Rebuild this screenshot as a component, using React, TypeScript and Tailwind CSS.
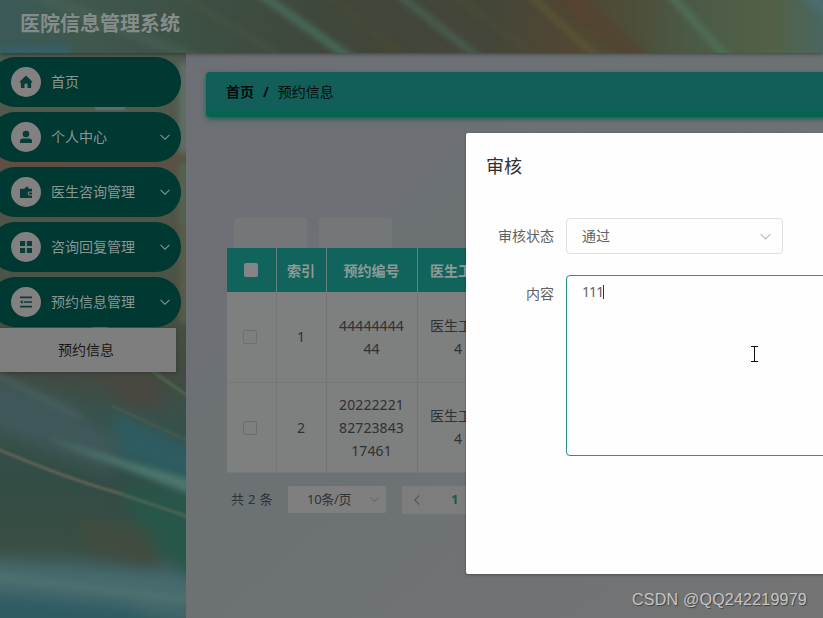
import React from 'react';

interface MenuItem {
    label: string;
    icon: React.ReactNode;
    expandable: boolean;
}

interface Appointment {
    id: number;
    code: string[];
    doctor: string[];
}

const menuItems: MenuItem[] = [
    { label: '首页', expandable: false, icon: <path d="M8 1.6 1.8 7.4v1h1.1V14h3.6v-4.2h3V14h3.6V8.4h1.1v-1z" /> },
    { label: '个人中心', expandable: true, icon: <><circle cx="8" cy="5" r="3.3" /><path d="M2 14v-2.2c0-1.5 1.1-2.4 2.6-2.4h6.8c1.5 0 2.6.9 2.6 2.4V14z" /></> },
    { label: '医生咨询管理', expandable: true, icon: <path fillRule="evenodd" d="M2 4.8h4.2L9 2.2l2 2.6h3v2.6h-2.4a2 2 0 0 0 0 4H14V14H2zM11.6 8.4H14v2h-2.4a1 1 0 0 1 0-2z" /> },
    { label: '咨询回复管理', expandable: true, icon: <path d="M2 2h5.1v5.1H2zM8.9 2H14v5.1H8.9zM2 8.9h5.1V14H2zM8.9 8.9H14V14H8.9z" /> },
    { label: '预约信息管理', expandable: true, icon: <path d="M2 2.6h12v1.6H2zM5.8 7.2H14v1.6H5.8zM2 11.8h12v1.6H2zM4.6 6v4L2 8z" /> },
];

const rows: Appointment[] = [
    { id: 1, code: ['44444444', '44'], doctor: ['医生工号', '4'] },
    { id: 2, code: ['20222221', '82723843', '17461'], doctor: ['医生工号', '4'] },
];

const Chevron: React.FC<{ className: string }> = ({ className }) => (
    <svg viewBox="0 0 12 12" className={className} fill="none" stroke="currentColor" strokeWidth="1.1">
        <path d="m1.5 3.8 4.5 4.4 4.5-4.4" />
    </svg>
);

const HeaderBackdrop: React.FC = () => (
    <svg className="absolute inset-0 h-full w-full" viewBox="0 0 823 53" preserveAspectRatio="none">
        <defs>
            <linearGradient id="head" x1="0" y1="0" x2="1" y2="0">
                <stop offset="0" stopColor="#3b5a59" />
                <stop offset=".1" stopColor="#40584e" />
                <stop offset=".25" stopColor="#3d4f43" />
                <stop offset=".4" stopColor="#40473b" />
                <stop offset=".6" stopColor="#454639" />
                <stop offset=".7" stopColor="#524733" />
                <stop offset=".77" stopColor="#4d4e3a" />
                <stop offset=".84" stopColor="#4b5a46" />
                <stop offset=".94" stopColor="#526147" />
                <stop offset="1" stopColor="#4a6660" />
            </linearGradient>
            <filter id="headSoft" x="-10%" y="-50%" width="120%" height="200%" colorInterpolationFilters="sRGB">
                <feGaussianBlur stdDeviation="3" />
            </filter>
        </defs>
        <rect width="823" height="53" fill="url(#head)" />
        <g filter="url(#headSoft)" fill="none">
            <path d="M-20 62 70 58" stroke="#356069" strokeWidth="26" />
            <path d="M252-12 360 65" stroke="#486a5a" strokeWidth="8" />
            <path d="M170-12 295 65" stroke="#495745" strokeWidth="5" opacity=".6" />
            <path d="M390-12 488 65" stroke="#486253" strokeWidth="6" />
            <path d="M318-12 410 62" stroke="#4b4a35" strokeWidth="4" />
            <path d="M445-12 545 62" stroke="#4c4c36" strokeWidth="4" />
            <path d="M522-12 602 62" stroke="#5d5c38" strokeWidth="4" />
            <path d="M556-12 645 65" stroke="#553f2c" strokeWidth="20" opacity=".5" />
            <path d="M664-12 734 65" stroke="#4f7059" strokeWidth="7" />
            <path d="m800-12 40 34" stroke="#4a6d70" strokeWidth="12" />
            <path d="m20-12 190 77" stroke="#4c6358" strokeWidth="12" opacity=".5" />
        </g>
    </svg>
);

const SidebarBackdrop: React.FC = () => (
    <svg className="absolute inset-0 h-full w-full" viewBox="0 0 186 565" preserveAspectRatio="none">
        <defs>
            <linearGradient id="side" x1="0" y1="0" x2="0" y2="1">
                <stop offset="0" stopColor="#4e5b51" />
                <stop offset=".1" stopColor="#52594c" />
                <stop offset=".19" stopColor="#5a5143" />
                <stop offset=".35" stopColor="#4b5748" />
                <stop offset=".56" stopColor="#434a41" />
                <stop offset=".63" stopColor="#3a514a" />
                <stop offset=".76" stopColor="#324d46" />
                <stop offset=".87" stopColor="#3a4e43" />
                <stop offset=".93" stopColor="#40656a" />
                <stop offset="1" stopColor="#3a6263" />
            </linearGradient>
            <filter id="sideWide" x="-50%" y="-20%" width="200%" height="140%" colorInterpolationFilters="sRGB">
                <feGaussianBlur stdDeviation="8" />
            </filter>
            <filter id="sideSoft" x="-20%" y="-10%" width="140%" height="120%" colorInterpolationFilters="sRGB">
                <feGaussianBlur stdDeviation="3" />
            </filter>
            <filter id="sideFine" x="-20%" y="-20%" width="140%" height="140%" colorInterpolationFilters="sRGB">
                <feGaussianBlur stdDeviation="1.2" />
            </filter>
        </defs>
        <rect width="186" height="565" fill="url(#side)" />
        <g filter="url(#sideWide)">
            <path d="M-20 320 60 345 120 390 110 420-20 370z" fill="#40585a" />
            <path d="M110 355 210 400v50L120 405z" fill="#2e5c60" />
            <path d="M120 430 210 450v90L150 490z" fill="#27574a" />
            <path d="M75 465 150 480 160 515 90 500z" fill="#414c3f" />
            <path d="M90 320h60l20 30-40 8z" fill="#484740" />
            <path d="M-20 510 210 530v30L-20 545z" fill="#4a6c6e" />
            <path d="M-20 538 130 552 190 590H-20z" fill="#2f5b63" />
        </g>
        <g filter="url(#sideSoft)" fill="none">
            <path d="M184 10v90" stroke="#607268" strokeWidth="9" />
            <path d="M183 110v60" stroke="#536552" strokeWidth="8" />
            <path d="M184 170v100" stroke="#5c5d49" strokeWidth="8" />
            <path d="M-10 318 80 364" stroke="#4c6360" strokeWidth="4" />
            <path d="M50 386 200 430 200 444z" fill="#4d776e" stroke="#4d776e" strokeWidth="1" />
            <path d="M-10 523 200 548" stroke="#4e7371" strokeWidth="5" />
        </g>
        <g filter="url(#sideFine)" fill="none">
            <path d="M-5 395 Q70 427 122 441" stroke="#686658" strokeWidth="2.5" />
            <path d="M118 440 195 466" stroke="#4c6456" strokeWidth="3" />
            <path d="M112 353 195 391" stroke="#4c5c4b" strokeWidth="2" />
            <path d="M152 318 195 348" stroke="#50644b" strokeWidth="3" />
            <path d="M95 55h30M92 275h16" stroke="#607a6c" strokeWidth="3" />
            <path d="M0 109h65" stroke="#654c40" strokeWidth="4" />
        </g>
    </svg>
);

const Sidebar: React.FC = () => (
    <aside className="relative w-[186px] shrink-0 overflow-hidden">
        <SidebarBackdrop />
        <nav className="relative flex flex-col gap-[5px] pt-1">
            {menuItems.map(item => (
                <a key={item.label} className="-ml-[10px] flex h-[50px] w-[191px] items-center rounded-full bg-[#003832] pl-[21px] pr-[10px] text-[14px] text-[#8b9693]">
                    <span className="flex h-[30px] w-[30px] items-center justify-center rounded-full bg-[#828080]">
                        <svg viewBox="0 0 16 16" className="h-4 w-4 fill-[#073d37]">{item.icon}</svg>
                    </span>
                    <span className="ml-[10px] flex-1 pb-px">{item.label}</span>
                    {item.expandable && <Chevron className="h-3 w-3 text-[#82918e]" />}
                </a>
            ))}
        </nav>
        <div className="relative mt-px flex h-11 w-[176px] items-center justify-center bg-[#7f7e7e] pb-[2px] pr-1 text-[14px] text-[#171717] shadow-[0_1px_4px_rgba(0,0,0,0.25)]">
            预约信息
        </div>
    </aside>
);

const AppointmentTable: React.FC = () => (
    <table className="w-[620px] table-fixed border-collapse text-center text-[14px] leading-[23px] text-[#303133]">
        <colgroup>
            <col className="w-[49px]" />
            <col className="w-[50px]" />
            <col className="w-[91px]" />
            <col className="w-[82px]" />
            <col />
        </colgroup>
        <thead>
            <tr className="h-11 bg-[#11645b] text-[#8e9a98]">
                <th className="border-r border-[#65827e]"><span className="mx-auto block h-[14px] w-[14px] rounded-[2px] bg-[#858585]" /></th>
                <th className="border-r border-[#65827e]">索引</th>
                <th className="border-r border-[#65827e]">预约编号</th>
                <th className="whitespace-nowrap border-r border-[#65827e]">医生工号</th>
                <th />
            </tr>
        </thead>
        <tbody>
            {rows.map(row => (
                <tr key={row.id} className="h-[90px] border-b border-[#767777] bg-[#7e7f7f]">
                    <td className="border-r border-[#747676]"><span className="ml-[16px] mt-px block h-[14px] w-[14px] rounded-[2px] border border-[#6d6e6f]" /></td>
                    <td className="border-r border-[#747676]">{row.id}</td>
                    <td className="border-r border-[#747676] tracking-[0.1px]">
                        {row.code.map(part => <div key={part}>{part}</div>)}
                    </td>
                    <td className="whitespace-nowrap border-r border-[#747676]">
                        {row.doctor.map(part => <div key={part}>{part}</div>)}
                    </td>
                    <td />
                </tr>
            ))}
        </tbody>
    </table>
);

const AuditDialog: React.FC = () => (
    <div className="absolute left-[466px] top-[133px] h-[441px] w-[500px] rounded-[2px] bg-[#fefefe] text-[14px] text-[#606266] shadow-[0_1px_3px_rgba(0,0,0,0.3)]">
        <h2 className="px-5 pt-5 text-[18px] leading-[26px] text-[#303133]">审核</h2>
        <div className="mt-[39px] flex">
            <label className="w-[100px] pr-3 text-right leading-[36px]">审核状态</label>
            <div className="flex h-[36px] w-[217px] items-center justify-between rounded-[4px] border border-[#dcdfe6] pl-[15px] pr-[10px]">
                <span className="pb-[2px]">通过</span>
                <Chevron className="h-[13px] w-[13px] text-[#b9bcc3]" />
            </div>
        </div>
        <div className="mt-[21px] flex">
            <label className="w-[100px] pr-3 text-right leading-[38px]">内容</label>
            <div className="flex h-[181px] w-[390px] rounded-[4px] border border-[#249388] px-[15px] pt-[5px] leading-[21px]">
                <span className="tracking-[-0.9px]">111</span>
                <span className="mt-[4px] h-[14px] w-px bg-[#333]" />
            </div>
        </div>
    </div>
);

const App: React.FC = () => {
    return (
        <div className="relative flex h-[618px] w-[823px] flex-col overflow-hidden bg-[#6c7073] font-['Noto_Sans','Noto_Sans_CJK_SC',sans-serif]">
            <header className="relative z-10 h-[53px] shrink-0 shadow-[0_1px_4px_rgba(0,0,0,0.45)]">
                <HeaderBackdrop />
                <h1 className="relative pl-5 pt-[9px] text-[20px] font-bold leading-[30px] text-[#858d8a]">医院信息管理系统</h1>
            </header>
            <div className="flex min-h-0 flex-1">
                <Sidebar />
                <main className="flex-1 overflow-hidden bg-linear-to-br from-[#6d6f74] via-[#6c7274] to-[#747474] pl-5 pt-[19px]">
                    <div className="flex h-[45px] w-[700px] items-center rounded-[4px] bg-[#125f5a] px-5 pb-[6px] text-[14px] text-[#050c0b] shadow-[0_2px_5px_#1d5b4c,inset_0_-7px_6px_-2px_#00664c]">
                        <span className="font-bold">首页</span>
                        <span className="mx-[9px] font-bold">/</span>
                        <span>预约信息</span>
                    </div>
                    <div className="ml-[21px] mt-[101px]">
                        <div className="flex gap-3 pl-[7px]">
                            <div className="h-[30px] w-[73px] rounded-t-[3px] bg-[#747778]" />
                            <div className="h-[30px] w-[73px] rounded-t-[3px] bg-[#747778]" />
                        </div>
                        <AppointmentTable />
                        <div className="mt-[13px] flex h-7 items-center text-[13px] text-[#303336]">
                            <span className="w-[61px] pl-1 tracking-[0.3px]">共 2 条</span>
                            <div className="flex h-[27px] w-[98px] items-center rounded-[2px] bg-[#7f7f7f] pl-[19px] pr-[6px]">
                                <span className="flex-1 tracking-[-0.3px]">10条/页</span>
                                <Chevron className="h-[11px] w-[11px] text-[#626568]" />
                            </div>
                            <div className="ml-4 flex h-7 w-[140px] items-center bg-[#7d7d7d] pl-[9px]">
                                <Chevron className="h-3 w-3 rotate-90 text-[#55585b]" />
                                <span className="ml-[28px] font-bold text-[#08634f]">1</span>
                            </div>
                        </div>
                    </div>
                </main>
            </div>
            <AuditDialog />
            <svg className="absolute left-[750px] top-[345px] z-20 h-[18px] w-[9px]" viewBox="0 0 9 18" fill="none" stroke="#111" shapeRendering="crispEdges">
                <path d="M1 1.5h7M1 16.5h7M4.5 1.5v15" />
            </svg>
            <div className="absolute bottom-[7px] right-[16px] font-['Liberation_Sans',sans-serif] text-[16px] leading-[22px] tracking-[0.23px] text-[#c5c5c5] [text-shadow:1px_1px_1px_#444]">
                CSDN @QQ242219979
            </div>
        </div>
    );
};

export default App;
